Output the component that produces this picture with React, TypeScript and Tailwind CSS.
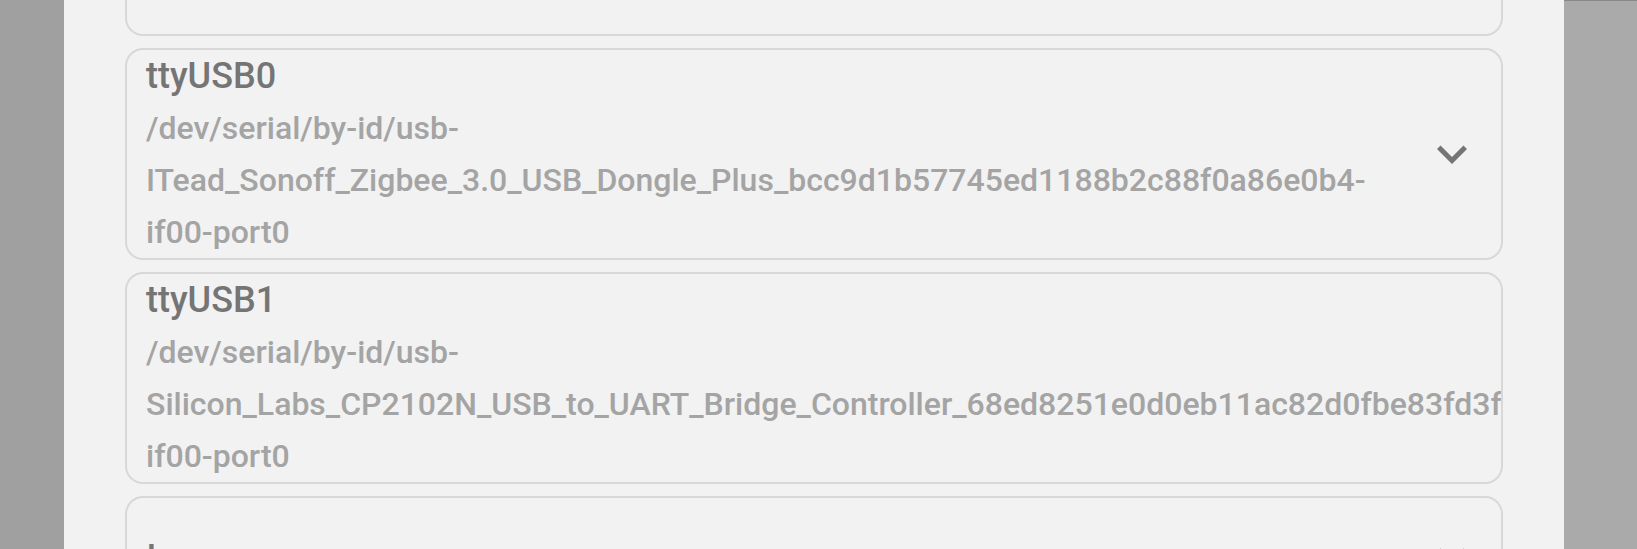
interface Port {
  name: string;
  path?: string;
}

const ports: Port[] = [
  { name: "ttyS0" },
  {
    name: "ttyUSB0",
    path: "/dev/serial/by-id/usb-ITead_Sonoff_Zigbee_3.0_USB_Dongle_Plus_bcc9d1b57745ed1188b2c88f0a86e0b4-if00-port0",
  },
  {
    name: "ttyUSB1",
    path: "/dev/serial/by-id/usb-Silicon_Labs_CP2102N_USB_to_UART_Bridge_Controller_68ed8251e0d0eb11ac82d0fbe83fd3f1-if00-port0",
  },
  { name: "tun" },
];

function Chevron() {
  return (
    <svg viewBox="0 0 24 24" className="w-[60px] h-[60px] shrink-0 fill-[#757575]">
      <path d="M16.59 8.59L12 13.17 7.41 8.59 6 10l6 6 6-6z" />
    </svg>
  );
}

export default function App() {
  return (
    <div className="flex w-full h-[549px] overflow-hidden bg-[#a0a0a0] font-[Roboto,sans-serif]">
      <div className="w-[64px] shrink-0 bg-[#a0a0a0]" />
      <div className="w-[1500px] shrink-0 bg-[#f2f2f2] px-[61px]">
        <div className="flex flex-col gap-3 -mt-[86px]">
          {ports.map((p) => (
            <div
              key={p.name}
              className="flex items-center min-h-[122px] pl-[19px] pr-[19px] border-2 border-[#d8d8d8] rounded-[18px] overflow-hidden"
            >
              <div className="flex-1 font-medium">
                <div className="text-[36px] leading-[52px] text-[#757575]">{p.name}</div>
                {p.path && (
                  <div className="text-[32px] leading-[52px] text-[#a4a4a4]">{p.path}</div>
                )}
              </div>
              <Chevron />
            </div>
          ))}
        </div>
      </div>
      <div className="flex-1 bg-[#aaaaaa] border-t border-[#888888]" />
    </div>
  );
}
